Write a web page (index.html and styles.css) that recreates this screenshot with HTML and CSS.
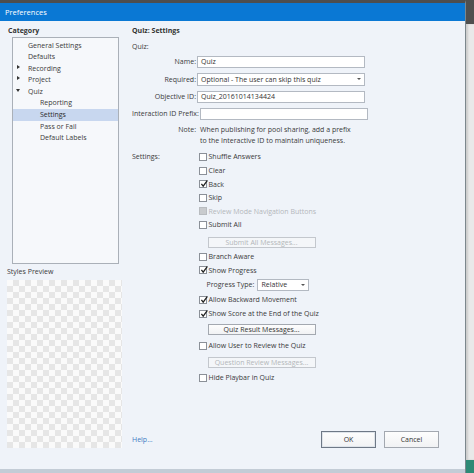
FILE: index.html
```html
<!DOCTYPE html>
<html>
<head>
<meta charset="utf-8">
<title>Preferences</title>
<link rel="stylesheet" href="styles.css">
</head>
<body>
<div class="screen">
  <div class="window">
    <div class="titlebar">Preferences</div>
    <div class="dialog">
      <div class="left">
        <div class="heading">Category</div>
        <div class="tree">
          <div class="node">General Settings</div>
          <div class="node">Defaults</div>
          <div class="node parent"><span class="tw closed"></span>Recording</div>
          <div class="node parent"><span class="tw closed"></span>Project</div>
          <div class="node parent"><span class="tw open"></span>Quiz</div>
          <div class="node child">Reporting</div>
          <div class="node child selected">Settings</div>
          <div class="node child">Pass or Fail</div>
          <div class="node child">Default Labels</div>
        </div>
        <div class="preview-label">Styles Preview</div>
        <div class="checker"></div>
      </div>
      <div class="right">
        <div class="heading">Quiz: Settings</div>
        <div class="section">Quiz:</div>
        <div class="frow r-name"><div class="flabel">Name:</div><div class="input">Quiz</div></div>
        <div class="frow r-req"><div class="flabel">Required:</div><div class="input select">Optional - The user can skip this quiz<span class="arrow"></span></div></div>
        <div class="frow r-obj"><div class="flabel">Objective ID:</div><div class="input">Quiz_20161014134424</div></div>
        <div class="frow r-pre"><div class="flabel">Interaction ID Prefix:</div><div class="input"></div></div>
        <div class="note"><div class="flabel">Note:</div><div class="note-text">When publishing for pool sharing, add a prefix<br>to the Interactive ID to maintain uniqueness.</div></div>
        <div class="settings">
          <div class="slabel">Settings:</div>
          <div class="checks">
            <div class="cb"><span class="box"></span>Shuffle Answers</div>
            <div class="cb"><span class="box"></span>Clear</div>
            <div class="cb"><span class="box"><svg viewBox="0 0 8 8"><path d="M1.4 3.8 L3.2 6.2 L7.4 0.4"/></svg></span>Back</div>
            <div class="cb"><span class="box"></span>Skip</div>
            <div class="cb disabled"><span class="box"></span>Review Mode Navigation Buttons</div>
            <div class="cb"><span class="box"></span>Submit All</div>
            <div class="brow b1"><div class="btn small disabled">Submit All Messages...</div></div>
            <div class="cb"><span class="box"></span>Branch Aware</div>
            <div class="cb"><span class="box"><svg viewBox="0 0 8 8"><path d="M1.4 3.8 L3.2 6.2 L7.4 0.4"/></svg></span>Show Progress</div>
            <div class="prow"><span class="plabel">Progress Type:</span><div class="input select pselect">Relative<span class="arrow"></span></div></div>
            <div class="cb tall"><span class="box"><svg viewBox="0 0 8 8"><path d="M1.4 3.8 L3.2 6.2 L7.4 0.4"/></svg></span>Allow Backward Movement</div>
            <div class="cb tall"><span class="box"><svg viewBox="0 0 8 8"><path d="M1.4 3.8 L3.2 6.2 L7.4 0.4"/></svg></span>Show Score at the End of the Quiz</div>
            <div class="brow b2"><div class="btn small">Quiz Result Messages...</div></div>
            <div class="cb tall"><span class="box"></span>Allow User to Review the Quiz</div>
            <div class="brow b3"><div class="btn small disabled">Question Review Messages...</div></div>
            <div class="cb tall"><span class="box"></span>Hide Playbar in Quiz</div>
          </div>
        </div>
        <div class="footer">
          <span class="help">Help...</span>
          <div class="buttons">
            <div class="btn big default">OK</div>
            <div class="btn big">Cancel</div>
          </div>
        </div>
      </div>
    </div>
    <div class="band"></div>
  </div>
  <div class="side">
    <div class="side-top"></div>
    <div class="side-mid"></div>
    <div class="side-bottom"></div>
  </div>
</div>
</body>
</html>
```

FILE: styles.css
```css
* { box-sizing: border-box; }
html, body { margin: 0; padding: 0; }
body {
  width: 474px;
  height: 473px;
  overflow: hidden;
  background: #e8e8e8;
  font-family: "Open Sans", "Noto Sans", sans-serif;
  font-size: 7px;
  color: #3a3a3a;
}
.screen { display: flex; height: 473px; }
.window {
  width: 466px;
  display: flex;
  flex-direction: column;
  border-top: 3px solid #4e4e4e;
  border-right: 1px solid #7c878d;
}
.titlebar {
  height: 18px;
  line-height: 18px;
  background: #0a78d4;
  color: #ffffff;
  padding-left: 5px;
  font-size: 7.5px;
}
.dialog { height: 448px; display: flex; background: #eff3f9; }
.band { flex: 1; background: #c3ccd6; }
.side { flex: 1; display: flex; flex-direction: column; }
.side-top { height: 24px; background: #4f4f4f; }
.side-mid { flex: 1; background: #e9e9e9; box-shadow: inset 2px 0 2px rgba(0,0,0,0.12); }
.side-bottom { height: 13px; background: #2e8a76; }

/* left */
.left { width: 126px; display: flex; flex-direction: column; }
.heading { font-weight: 700; line-height: 10px; margin-top: 5px; color: #333; }
.left .heading { margin-left: 8px; }
.tree {
  margin: 1px 0 0 12px;
  width: 107px;
  height: 227px;
  border: 1px solid #aab0b8;
  background: #f6f8fb;
  padding-top: 1.5px;
}
.node { height: 11.6px; line-height: 11.6px; padding-left: 15px; white-space: nowrap; }
.node.parent { padding-left: 3px; }
.node.child { padding-left: 27px; }
.node.selected { background: #c8d7ef; color: #2a2a2a; }
.tw { display: inline-block; width: 12px; height: 8px; vertical-align: middle; position: relative; top: -1px; }
.tw.closed::before {
  content: ""; display: block; margin: 1px 0 0 1px; width: 0; height: 0;
  border-top: 2.5px solid transparent; border-bottom: 2.5px solid transparent; border-left: 3.5px solid #333;
}
.tw.open::before {
  content: ""; display: block; margin: 2px 0 0 0; width: 0; height: 0;
  border-left: 2.5px solid transparent; border-right: 2.5px solid transparent; border-top: 3.5px solid #333;
}
.preview-label { margin: 3px 0 0 7px; line-height: 10px; }
.checker {
  margin: 3px 0 0 7px;
  width: 115px;
  height: 168px;
  background-color: #fafafa;
  background-image:
    linear-gradient(45deg, #e6e6e6 25%, transparent 25%, transparent 75%, #e6e6e6 75%),
    linear-gradient(45deg, #e6e6e6 25%, transparent 25%, transparent 75%, #e6e6e6 75%);
  background-size: 12px 12px;
  background-position: 0 0, 6px 6px;
}

/* right */
.right { flex: 1; display: flex; flex-direction: column; padding-left: 6px; }
.section { margin-top: 6px; line-height: 10px; }
.frow { display: flex; height: 12px; margin-top: 5px; }
.r-name { margin-top: 4px; }
.r-req { height: 13px; }
.flabel {
  flex: 0 0 65px;
  display: flex;
  justify-content: flex-end;
  white-space: nowrap;
  padding-right: 1px;
  line-height: 12px;
}
.r-req .flabel { line-height: 13px; }
.input {
  width: 168px;
  background: #ffffff;
  border: 1px solid #b3b9c2;
  padding-left: 3px;
  line-height: 10px;
  white-space: nowrap;
  position: relative;
  color: #333;
}
.select { line-height: 11px; }
.arrow {
  position: absolute; right: 3px; top: 4px; width: 0; height: 0;
  border-left: 2px solid transparent; border-right: 2px solid transparent; border-top: 2.5px solid #555;
}
.note { display: flex; margin-top: 3.5px; }
.note .flabel { line-height: 11px; }
.note-text { margin-left: 3px; line-height: 11px; }
.settings { display: flex; margin-top: 4.7px; }
.slabel { flex: 0 0 66.5px; line-height: 13.6px; }
.checks { display: flex; flex-direction: column; }
.cb { height: 13.6px; display: flex; align-items: center; white-space: nowrap; }
.cb.tall { height: 14px; }
.box {
  width: 8px; height: 8px; margin-right: 2px;
  border: 1px solid #8b9098; background: #ffffff;
  position: relative; flex: none;
}
.box svg { position: absolute; left: 0; top: -1px; width: 8px; height: 8px; overflow: visible; }
.box path { fill: none; stroke: #222; stroke-width: 1.3; }
.cb.disabled { color: #b4b7bb; }
.cb.disabled .box { background: #c9cbce; border-color: #b9bcc0; }
.brow { display: flex; padding-left: 9px; }
.b1 { height: 18px; padding-top: 5px; }
.b2 { height: 18px; padding-top: 3px; }
.b3 { height: 18px; padding-top: 4px; }
.btn {
  display: flex; align-items: center; justify-content: center;
  background: linear-gradient(#fdfdfd, #f1f2f4);
  border: 1px solid #a3a8b0;
  color: #333;
  white-space: nowrap;
}
.btn.small { width: 108px; height: 11.5px; }
.btn.disabled { color: #b3b6ba; border-color: #c3c7cd; background: #f4f6f9; }
.prow { height: 16px; display: flex; align-items: center; padding-left: 8px; }
.plabel { width: 50px; }
.pselect { width: 52px; height: 12px; line-height: 10px; padding-left: 4px; }
.footer {
  margin-top: auto;
  display: flex;
  align-items: center;
  justify-content: space-between;
  padding: 0 26px 21px 0;
}
.help { color: #3f7cc4; }
.buttons { display: flex; gap: 8px; }
.btn.big { width: 55px; height: 17px; }
.btn.default { border-color: #6e7886; box-shadow: inset 0 0 0 1px #dfe4ea; }
```
